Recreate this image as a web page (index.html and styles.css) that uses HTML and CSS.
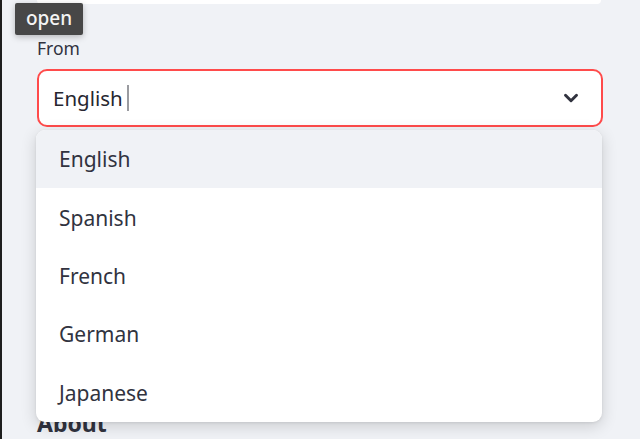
FILE: index.html
```html
<!DOCTYPE html>
<html>
<head>
<meta charset="utf-8">
<link rel="stylesheet" href="styles.css">
</head>
<body>
<div class="frame">
  <div class="col">
    <div class="prev-input"></div>
    <div class="field">
      <div class="label">From</div>
      <div class="select">
        <div class="value">English<span class="caret"></span></div>
        <svg class="chev" viewBox="0 0 24 24" width="22" height="22"><polyline points="6 9 12 15 18 9" fill="none" stroke="#31333f" stroke-width="3.2" stroke-linecap="round" stroke-linejoin="round"/></svg>
      </div>
    </div>
    <h2 class="about">About</h2>
  </div>
  <div class="tooltip">open</div>
  <ul class="menu">
    <li class="opt active">English</li>
    <li class="opt">Spanish</li>
    <li class="opt">French</li>
    <li class="opt">German</li>
    <li class="opt">Japanese</li>
  </ul>
</div>
</body>
</html>
```
FILE: styles.css
```css
html, body {
  margin: 0;
  padding: 0;
  background: #f0f2f6;
  font-family: "Noto Sans", "Open Sans", sans-serif;
  color: #31333f;
  overflow: hidden;
}
.frame {
  position: relative;
  width: 640px;
  height: 439px;
  border-left: 2px solid #1e1e1e;
  box-sizing: border-box;
  overflow: hidden;
}
.col {
  display: flex;
  flex-direction: column;
  width: 566px;
  padding-left: 35px;
}
.prev-input {
  height: 4px;
  background: #ffffff;
  border-radius: 0 0 8px 8px;
  margin-right: 2px;
}
.field {
  display: flex;
  flex-direction: column;
}
.label {
  font-size: 17.5px;
  line-height: 24px;
  margin-top: 32px;
  height: 33px;
}
.select {
  display: flex;
  align-items: center;
  justify-content: space-between;
  height: 58px;
  box-sizing: border-box;
  background: #ffffff;
  border: 2px solid #ff4b4b;
  border-radius: 10px;
  padding: 0 19px 0 14px;
}
.value {
  display: flex;
  align-items: center;
  font-size: 20.5px;
  line-height: 28px;
  color: #262730;
}
.caret {
  display: inline-block;
  width: 2px;
  height: 26px;
  background: #9a9ba0;
  margin-left: 4px;
}
.chev {
  display: block;
}
.about {
  margin: 279px 0 0 0;
  font-size: 23px;
  line-height: 34px;
  font-weight: 700;
  color: #31333f;
}
.tooltip {
  position: absolute;
  left: 13px;
  top: 3px;
  width: 68px;
  height: 32px;
  background: #474747;
  color: #f4f4f4;
  font-size: 19px;
  font-weight: 500;
  line-height: 30px;
  text-align: center;
  border-radius: 2px;
  box-shadow: 0 2px 6px rgba(0,0,0,0.25);
}
.menu {
  position: absolute;
  left: 34px;
  top: 130px;
  width: 566px;
  margin: 0;
  padding: 0;
  list-style: none;
  background: #ffffff;
  border-radius: 9px;
  overflow: hidden;
  box-shadow: 0 4px 16px rgba(0,0,0,0.16), 0 1px 3px rgba(0,0,0,0.08);
}
.opt {
  height: 58.4px;
  display: flex;
  align-items: center;
  padding-left: 23px;
  font-size: 21px;
  color: #31333f;
}
.opt.active {
  background: #f0f2f6;
}
```
